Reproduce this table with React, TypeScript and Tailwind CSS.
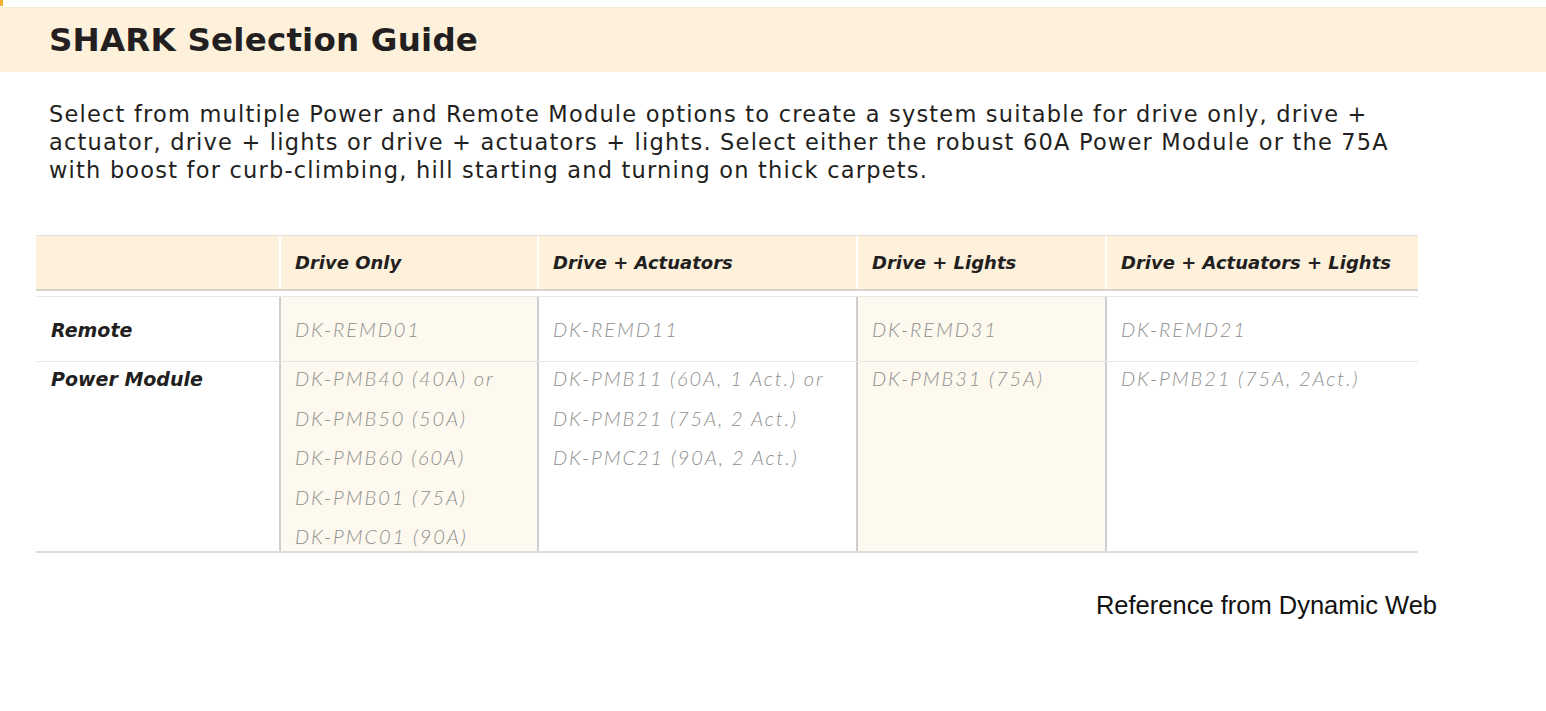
import React from "react";

const cols = "grid grid-cols-[243px_258px_319px_249px_313px]";

const headFont = { fontFamily: '"DejaVu Sans", sans-serif' } as React.CSSProperties;
const thinFont = { fontFamily: 'Lato, "Open Sans", sans-serif' } as React.CSSProperties;

function Cell({ lines, cream }: { lines: string[]; cream?: boolean }) {
  return (
    <div className={`border-l-2 border-[#cfcfcf] ${cream ? "bg-[#fdf9ee]" : "bg-white"} pl-[14px]`}>
      <div className="-mt-[3px]">
        {lines.map((l, i) => (
          <div key={i} className="whitespace-nowrap">{l}</div>
        ))}
      </div>
    </div>
  );
}

export default function App() {
  return (
    <div className="relative w-[1546px] h-[711px] bg-white overflow-hidden">
      <div className="absolute left-0 top-0 w-[3px] h-[6px] bg-[#f0b030]" />
      <div className="h-[7px]" />
      <div className="h-[65px] bg-[#fdf1dc] border-t border-[#f6ebc8] flex items-center pl-[49px]">
        <h1 className="text-[32.5px] font-bold text-[#231f20] tracking-[0.2px]" style={headFont}>
          SHARK Selection Guide
        </h1>
      </div>
      <div
        className="pl-[49px] pt-[28px] text-[22.5px] leading-[28px] text-[#231f20] tracking-[1.2px]"
        style={headFont}
      >
        <div className="whitespace-nowrap">Select from multiple Power and Remote Module options to create a system suitable for drive only, drive +</div>
        <div className="whitespace-nowrap">actuator, drive + lights or drive + actuators + lights. Select either the robust 60A Power Module or the 75A</div>
        <div className="whitespace-nowrap">with boost for curb-climbing, hill starting and turning on thick carpets.</div>
      </div>

      <div className="ml-[36px] mt-[51px] w-[1382px]">
        {/* header row */}
        <div className={`${cols} h-[56px] border-t border-[#e6e1d6] border-b-2 border-b-[#d9d4ca] bg-white`}>
          {["", "Drive Only", "Drive + Actuators", "Drive + Lights", "Drive + Actuators + Lights"].map((h, i) => (
            <div
              key={i}
              className={`${i > 0 ? "border-l-2 border-white" : ""} bg-[#fdf1dc] flex items-center ${i === 0 ? "pl-[15px]" : "pl-[14px]"}`}
            >
              <span className="text-[18px] font-bold italic text-[#231f20] whitespace-nowrap" style={headFont}>
                {h}
              </span>
            </div>
          ))}
        </div>
        <div className="h-[5px]" />
        {/* body */}
        <div className="border-t border-[#e8e8e8] border-b-2 border-b-[#dedede]">
          <div
            className={`${cols} grid-rows-[64px] border-b border-[#e6e6e6] text-[20px] font-light italic text-[#8f8f8f] tracking-[1.9px] leading-[70px]`}
            style={thinFont}
          >
            <div className="pl-[15px] text-[19px] font-bold italic text-[#231f20] tracking-normal leading-[66px]" style={headFont}>
              Remote
            </div>
            <Cell lines={["DK-REMD01"]} cream />
            <Cell lines={["DK-REMD11"]} />
            <Cell lines={["DK-REMD31"]} cream />
            <Cell lines={["DK-REMD21"]} />
          </div>
          <div
            className={`${cols} grid-rows-[189px] text-[20px] font-light italic text-[#8f8f8f] tracking-[1.9px] leading-[39.5px]`}
            style={thinFont}
          >
            <div className="pl-[15px] text-[19px] font-bold italic text-[#231f20] tracking-normal" style={headFont}>
              <div className="-mt-[2px]">Power Module</div>
            </div>
            <Cell
              cream
              lines={["DK-PMB40 (40A) or", "DK-PMB50 (50A)", "DK-PMB60 (60A)", "DK-PMB01 (75A)", "DK-PMC01 (90A)"]}
            />
            <Cell lines={["DK-PMB11 (60A, 1 Act.) or", "DK-PMB21 (75A, 2 Act.)", "DK-PMC21 (90A, 2 Act.)"]} />
            <Cell cream lines={["DK-PMB31 (75A)"]} />
            <Cell lines={["DK-PMB21 (75A, 2Act.)"]} />
          </div>
        </div>
      </div>

      <div
        className="w-[1437px] text-right mt-[38px] text-[25.5px] leading-[28px] text-[#111]"
        style={{ fontFamily: '"Liberation Sans", Arial, sans-serif' }}
      >
        Reference from Dynamic Web
      </div>
    </div>
  );
}
